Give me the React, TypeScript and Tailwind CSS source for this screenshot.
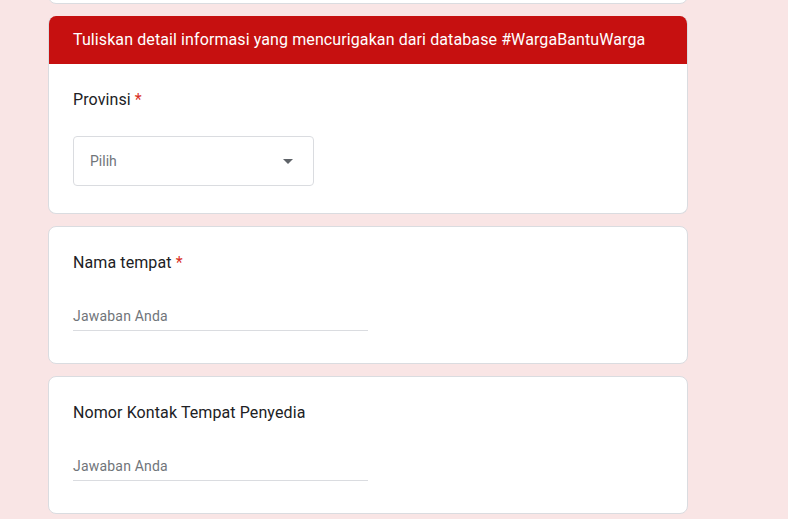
const font = { fontFamily: "Roboto, 'Liberation Sans', sans-serif" };

function Label({ text, required }: { text: string; required?: boolean }) {
  return (
    <div className="h-6 text-base leading-6 text-[#202124] tracking-[0.1px]">
      {text}
      {required && <span className="text-[#d93025]"> *</span>}
    </div>
  );
}

function ShortAnswer({ label, required }: { label: string; required?: boolean }) {
  return (
    <div className="bg-white border border-[#dadce0] rounded-lg px-6 pt-6 pb-8">
      <Label text={label} required={required} />
      <div className="mt-[25px] w-1/2 h-[31px] pt-[2px] border-b border-[#dadce0] flex items-center text-sm text-[#70757a] tracking-[0.2px]">
        Jawaban Anda
      </div>
    </div>
  );
}

export default function App() {
  return (
    <div className="min-h-screen bg-[#f9e5e5] overflow-hidden" style={font}>
      <div className="ml-12 w-[640px] flex flex-col gap-3">
        {/* previous question, scrolled almost out of view */}
        <div className="h-[100px] -mt-[96px] bg-white border border-[#dadce0] rounded-lg" />

        {/* section header + dropdown */}
        <div className="rounded-lg overflow-hidden border border-[#dadce0] border-t-0 bg-white">
          <div className="h-12 bg-[#c61010] px-6 flex items-center text-white text-base tracking-[0.1px]">
            Tuliskan detail informasi yang mencurigakan dari database #WargaBantuWarga
          </div>
          <div className="px-6 pt-6 pb-[27px]">
            <Label text="Provinsi" required />
            <div className="mt-6 w-[241px] h-[50px] border border-[#dadce0] rounded flex items-center justify-between pl-4 pr-5 text-sm text-[#70757a]">
              <span>Pilih</span>
              <svg width="10" height="5" viewBox="0 0 10 5">
                <path d="M0 0 L10 0 L5 5 Z" fill="#5f6368" />
              </svg>
            </div>
          </div>
        </div>

        <ShortAnswer label="Nama tempat" required />
        <ShortAnswer label="Nomor Kontak Tempat Penyedia" />
      </div>
    </div>
  );
}
